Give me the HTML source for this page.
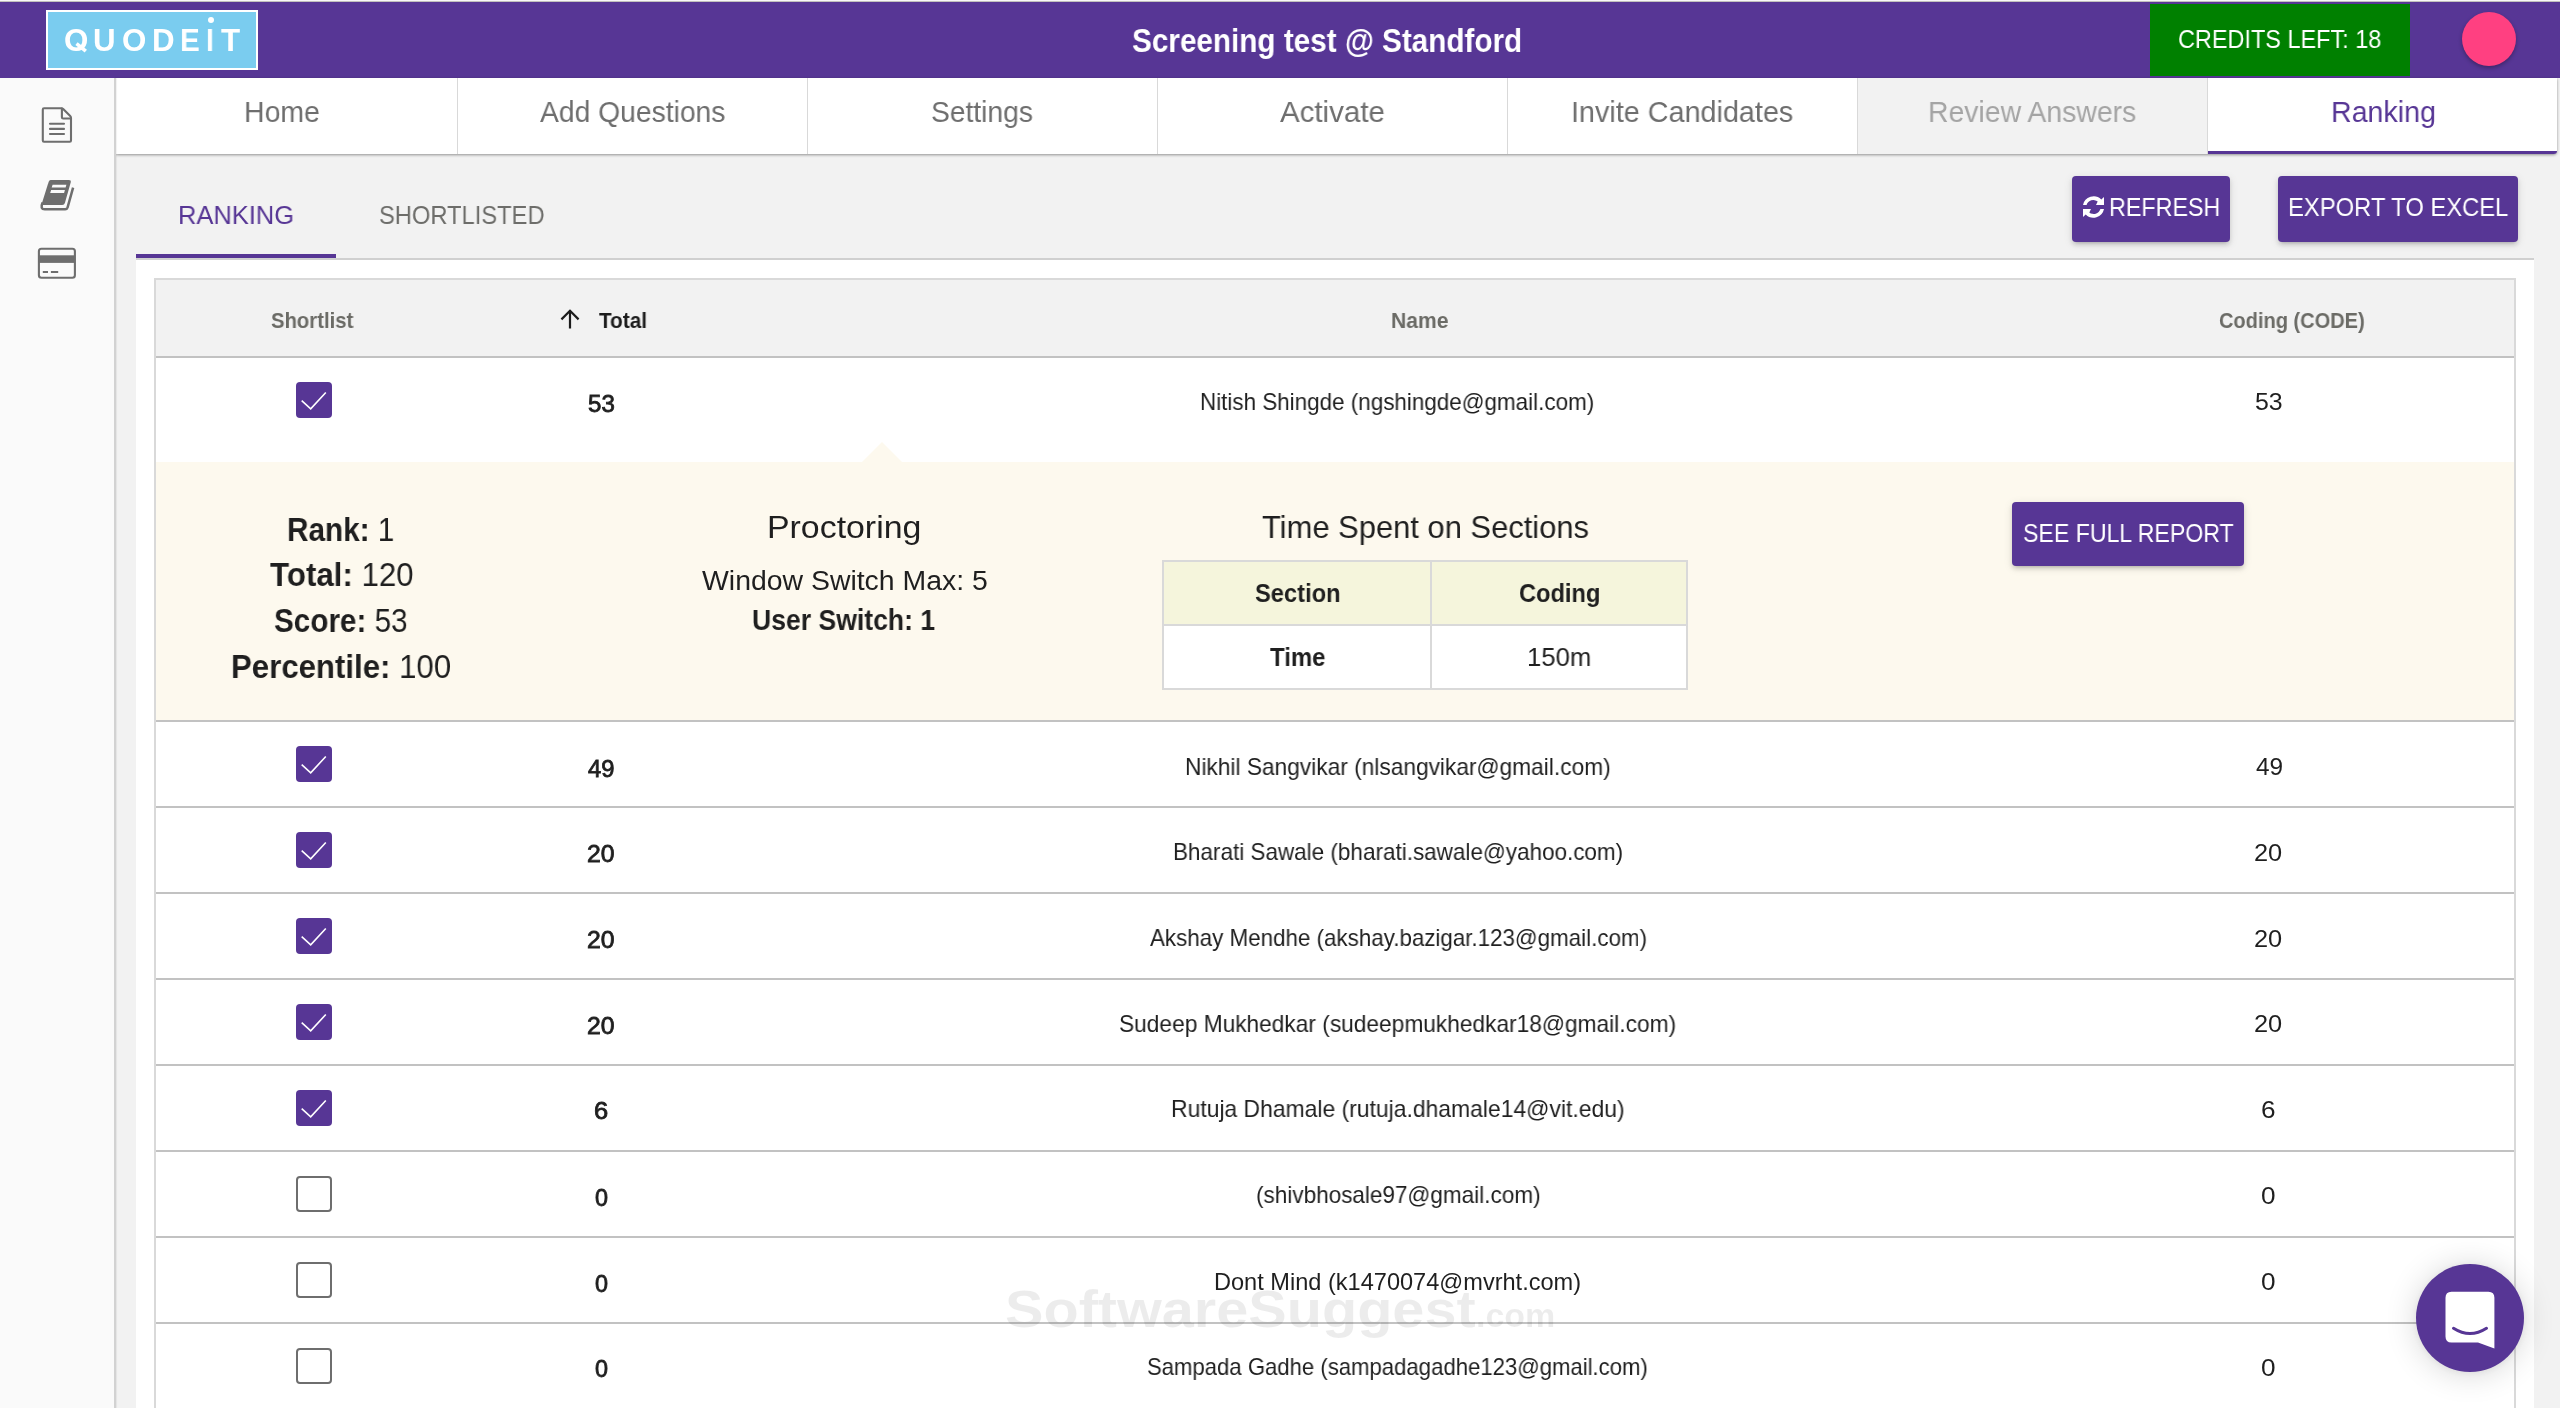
<!DOCTYPE html>
<html><head><meta charset="utf-8">
<style>
*{box-sizing:border-box;margin:0;padding:0}
html,body{width:2560px;height:1408px;overflow:hidden;background:#f2f2f2;font-family:"Liberation Sans",sans-serif}
.a{position:absolute}
.t{position:absolute;white-space:nowrap;line-height:1;transform-origin:0 0;will-change:transform}
.cb{position:absolute;left:296px;width:36px;height:36px;border-radius:4px;background:#573695}
.ub{position:absolute;left:296px;width:36px;height:36px;border-radius:4px;border:2px solid #6e6e6e;background:#fff}
.rl{position:absolute;left:156px;width:2358px;height:2px;background:#c2c2c2}
.btn{position:absolute;border-radius:4px;background:#573695;box-shadow:0 5px 2px -4px rgba(0,0,0,.1),0 3px 4px 0 rgba(0,0,0,.12),0 2px 10px 0 rgba(0,0,0,.1)}
.dv{position:absolute;top:78px;width:1px;height:76px;background:#d9d9d9}
</style></head><body>
<!-- top strip -->
<div class="a" style="left:0;top:0;width:2560px;height:1px;background:#f8f8f8"></div>
<div class="a" style="left:0;top:1px;width:2560px;height:1px;background:#c2c1bd"></div>
<!-- header -->
<div class="a" style="left:0;top:2px;width:2560px;height:76px;background:#573695"></div>
<div class="a" style="left:46px;top:10px;width:212px;height:60px;border:2px solid #fff;background:#7accef"></div>
<div class="a" style="left:207.5px;top:17px;width:6px;height:6px;border-radius:3px;background:#fff"></div>
<div class="a" style="left:2150px;top:4px;width:260px;height:72px;background:#008000"></div>
<div class="a" style="left:2462px;top:12px;width:54px;height:54px;border-radius:50%;background:#ff4081;box-shadow:0 2px 4px rgba(0,0,0,.3)"></div>


<!-- nav bar -->
<div class="a" style="left:116px;top:78px;width:2441px;height:76px;background:#fff;box-shadow:0 1px 3px rgba(0,0,0,.4);border-bottom-right-radius:4px"></div>
<div class="a" style="left:1857px;top:78px;width:350px;height:76px;background:#f2f2f2"></div>
<div class="a" style="left:2207px;top:151px;width:350px;height:3px;background:#573695;border-bottom-right-radius:4px"></div>
<div class="dv" style="left:457px"></div>
<div class="dv" style="left:807px"></div>
<div class="dv" style="left:1157px"></div>
<div class="dv" style="left:1507px"></div>
<div class="dv" style="left:1857px"></div>
<div class="dv" style="left:2207px"></div>

<!-- sidebar -->
<div class="a" style="left:0;top:78px;width:114px;height:1330px;background:#fafafa"></div>
<div class="a" style="left:114px;top:78px;width:2px;height:1330px;background:#d2d2d2;box-shadow:1px 0 1px rgba(0,0,0,.06)"></div>

<!-- sub tabs -->
<div class="a" style="left:136px;top:258px;width:2398px;height:2px;background:#d0d0d0"></div>
<div class="a" style="left:136px;top:254px;width:200px;height:4px;background:#573695"></div>
<div class="btn" style="left:2072px;top:176px;width:158px;height:66px"></div>
<div class="btn" style="left:2278px;top:176px;width:240px;height:66px"></div>

<!-- white panel -->
<div class="a" style="left:136px;top:260px;width:2398px;height:1148px;background:#fff"></div>
<!-- table -->
<div class="a" style="left:154px;top:278px;width:2362px;height:1130px;border:2px solid #d9d9d9;border-bottom:none"></div>
<div class="a" style="left:156px;top:280px;width:2358px;height:76px;background:#f2f2f2"></div>
<div class="rl" style="top:356px"></div>

<!-- cream panel -->
<div class="a" style="left:156px;top:462px;width:2358px;height:258px;background:#fdf9ee"></div>
<div class="a" style="left:862px;top:442px;width:0;height:0;border-left:20px solid transparent;border-right:20px solid transparent;border-bottom:20px solid #fdf9ee"></div>
<div class="rl" style="top:720px"></div>
<div class="rl" style="top:806px"></div>
<div class="rl" style="top:892px"></div>
<div class="rl" style="top:978px"></div>
<div class="rl" style="top:1064px"></div>
<div class="rl" style="top:1150px"></div>
<div class="rl" style="top:1236px"></div>
<div class="rl" style="top:1322px"></div>

<!-- inner table -->
<div class="a" style="left:1162px;top:560px;width:526px;height:130px;border:2px solid #d9d9d9;background:#fff"></div>
<div class="a" style="left:1164px;top:562px;width:522px;height:62px;background:#f5f5dc"></div>
<div class="a" style="left:1164px;top:624px;width:522px;height:2px;background:#d9d9d9"></div>
<div class="a" style="left:1430px;top:562px;width:2px;height:126px;background:#d9d9d9"></div>
<div class="btn" style="left:2012px;top:502px;width:232px;height:64px"></div>

<!-- checkboxes -->
<div class="cb" style="top:382px"></div>
<div class="cb" style="top:746px"></div>
<div class="cb" style="top:832px"></div>
<div class="cb" style="top:918px"></div>
<div class="cb" style="top:1004px"></div>
<div class="cb" style="top:1090px"></div>
<div class="ub" style="top:1176px"></div>
<div class="ub" style="top:1262px"></div>
<div class="ub" style="top:1348px"></div>

<svg class="a" style="left:0;top:0" width="2560" height="1408" viewBox="0 0 2560 1408">
 <path d="M76.5,43.6 L85.8,51.2" stroke="#fff" stroke-width="3.6"/>
 <!-- doc icon -->
 <g fill="none" stroke="#6e6e6e" stroke-width="2.1" stroke-linejoin="round" stroke-linecap="round">
  <path d="M44,108.2 H61.2 Q62.4,108.2 63.2,109 L70.2,116 Q71,116.8 71,118 V140.5 Q71,141.7 69.8,141.7 H44 Q42.8,141.7 42.8,140.5 V109.4 Q42.8,108.2 44,108.2 Z"/>
  <path d="M61.9,108.6 V117.3 Q61.9,118.5 63.1,118.5 H70.6"/>
  <path d="M50,123.8 H64 M50,128.9 H64 M50,134 H64"/>
 </g>
 <!-- book icon -->
 <path fill="#6e6e6e" d="M50.6,180.1 H68.9 Q71.3,180.1 70.7,182.5 L64.9,203 Q64.3,205.1 62.2,205.1 H43.6 Q41.4,205.1 42,203 L48.6,182.1 Q49.3,180.1 50.6,180.1 Z"/>
 <path fill="none" stroke="#6e6e6e" stroke-width="2.5" d="M42.6,202.6 Q39.6,209.3 45,209.3 H65.2 Q67,209.3 67.6,207.4 L73.1,187.6"/>
 <path fill="#fafafa" d="M52.6,184.8 H66.4 L65.6,187.6 H51.7 Z M51.1,189.9 H64.9 L64.1,192.9 H50.2 Z"/>
 <!-- card icon -->
 <g fill="none" stroke="#6e6e6e" stroke-width="2.1">
  <rect x="38.9" y="248.7" width="36" height="29" rx="2.5"/>
 </g>
 <rect x="38.9" y="255.3" width="36" height="7.6" fill="#6e6e6e"/>
 <path d="M42.8,272 H48 M50.9,272 H58.2" stroke="#6e6e6e" stroke-width="2"/>
 <!-- refresh icon -->
 <g fill="#fff">
  <path d="M2083,205 A10.8,10.8 0 0 1 2101.3,199.6 L2104,197 L2104,205 L2096,205 L2097.7,201.6 A7 7 0 0 0 2086.6,205 Z"/>
  <path d="M2104,209 A10.8,10.8 0 0 1 2085.7,214.4 L2083,217 L2083,209 L2091,209 L2089.3,212.4 A7 7 0 0 0 2100.4,209 Z"/>
 </g>
 <!-- sort arrow -->
 <g fill="none" stroke="#1c1c1c" stroke-width="2.2" stroke-linecap="square">
  <path d="M570,311 V327.4 M562.2,318.6 L570,310.8 L577.8,318.6"/>
 </g>
 <!-- check marks -->
 <g fill="none" stroke="#fff" stroke-width="1.6">
  <path d="M301.7,400.7 L310.7,408.8 L325.8,392.5"/>
  <path transform="translate(0,364)" d="M301.7,400.7 L310.7,408.8 L325.8,392.5"/>
  <path transform="translate(0,450)" d="M301.7,400.7 L310.7,408.8 L325.8,392.5"/>
  <path transform="translate(0,536)" d="M301.7,400.7 L310.7,408.8 L325.8,392.5"/>
  <path transform="translate(0,622)" d="M301.7,400.7 L310.7,408.8 L325.8,392.5"/>
  <path transform="translate(0,708)" d="M301.7,400.7 L310.7,408.8 L325.8,392.5"/>
 </g>
</svg>

<div class="t" style="left:1132.12px;top:24.20px;font-size:33.6px;font-weight:700;color:#fff;transform:scaleX(0.8842);">Screening test @ Standford</div>
<div class="t" style="left:2178.48px;top:26.90px;font-size:25.6px;font-weight:400;color:#fff;transform:scaleX(0.9159);">CREDITS LEFT: 18</div>
<div class="t" style="left:64.01px;top:24.60px;font-size:31.3px;font-weight:700;color:#fff;transform:scaleX(0.9864);">O</div>
<div class="t" style="left:93.00px;top:24.60px;font-size:31.3px;font-weight:700;color:#fff;transform:scaleX(1.0000);">U</div>
<div class="t" style="left:122.00px;top:24.60px;font-size:31.3px;font-weight:700;color:#fff;transform:scaleX(1.0000);">O</div>
<div class="t" style="left:152.00px;top:24.60px;font-size:31.3px;font-weight:700;color:#fff;transform:scaleX(1.0000);">D</div>
<div class="t" style="left:180.11px;top:24.60px;font-size:31.3px;font-weight:700;color:#fff;transform:scaleX(0.9444);">E</div>
<div class="t" style="left:206.20px;top:24.60px;font-size:31.3px;font-weight:700;color:#fff;transform:scaleX(0.9000);">I</div>
<div class="t" style="left:221.00px;top:24.60px;font-size:31.3px;font-weight:700;color:#fff;transform:scaleX(1.0000);">T</div>
<div class="t" style="left:244.20px;top:97.00px;font-size:30px;font-weight:400;color:#6e6e6e;transform:scaleX(0.9494);">Home</div>
<div class="t" style="left:539.70px;top:97.00px;font-size:30px;font-weight:400;color:#6e6e6e;transform:scaleX(0.9423);">Add Questions</div>
<div class="t" style="left:931.06px;top:97.00px;font-size:30px;font-weight:400;color:#6e6e6e;transform:scaleX(0.9402);">Settings</div>
<div class="t" style="left:1280.30px;top:97.00px;font-size:30px;font-weight:400;color:#6e6e6e;transform:scaleX(0.9830);">Activate</div>
<div class="t" style="left:1570.52px;top:97.00px;font-size:30px;font-weight:400;color:#6e6e6e;transform:scaleX(0.9588);">Invite Candidates</div>
<div class="t" style="left:1928.31px;top:97.00px;font-size:30px;font-weight:400;color:#a4a4a4;transform:scaleX(0.9465);">Review Answers</div>
<div class="t" style="left:2330.89px;top:97.00px;font-size:30px;font-weight:400;color:#573695;transform:scaleX(0.9528);">Ranking</div>
<div class="t" style="left:177.76px;top:202.00px;font-size:26.3px;font-weight:400;color:#573695;transform:scaleX(0.9698);">RANKING</div>
<div class="t" style="left:379.40px;top:202.00px;font-size:26.3px;font-weight:400;color:#6d6d6a;transform:scaleX(0.9016);">SHORTLISTED</div>
<div class="t" style="left:2109.18px;top:194.90px;font-size:25.6px;font-weight:400;color:#fff;transform:scaleX(0.9102);">REFRESH</div>
<div class="t" style="left:2287.84px;top:194.90px;font-size:25.6px;font-weight:400;color:#fff;transform:scaleX(0.9295);">EXPORT TO EXCEL</div>
<div class="t" style="left:2022.71px;top:520.00px;font-size:26px;font-weight:400;color:#fff;transform:scaleX(0.8890);">SEE FULL REPORT</div>
<div class="t" style="left:271.16px;top:309.70px;font-size:21.6px;font-weight:700;color:#6b6b66;transform:scaleX(0.9379);">Shortlist</div>
<div class="t" style="left:598.60px;top:309.70px;font-size:21.6px;font-weight:700;color:#1c1c1c;transform:scaleX(0.9612);">Total</div>
<div class="t" style="left:1390.82px;top:309.80px;font-size:21.6px;font-weight:700;color:#6b6b66;transform:scaleX(0.9789);">Name</div>
<div class="t" style="left:2218.67px;top:309.70px;font-size:21.6px;font-weight:700;color:#6b6b66;transform:scaleX(0.9271);">Coding (CODE)</div>
<div class="t" style="left:587.75px;top:393.20px;font-size:23px;font-weight:400;color:#1f1f1f;transform:scaleX(1.0458);-webkit-text-stroke:0.8px #1f1f1f">53</div>
<div class="t" style="left:1200.38px;top:390.50px;font-size:23.4px;font-weight:400;color:#1f1f1f;transform:scaleX(0.9586);">Nitish Shingde (ngshingde@gmail.com)</div>
<div class="t" style="left:2254.65px;top:391.20px;font-size:23.6px;font-weight:400;color:#1f1f1f;transform:scaleX(1.0542);">53</div>
<div class="t" style="left:287.15px;top:512.50px;font-size:33.9px;font-weight:400;color:#1f1f1f;transform:scaleX(0.8773);"><b>Rank:</b> 1</div>
<div class="t" style="left:269.70px;top:557.90px;font-size:33.9px;font-weight:400;color:#1f1f1f;transform:scaleX(0.9227);"><b>Total:</b> 120</div>
<div class="t" style="left:274.22px;top:603.80px;font-size:33.9px;font-weight:400;color:#1f1f1f;transform:scaleX(0.8753);"><b>Score:</b> 53</div>
<div class="t" style="left:231.16px;top:649.80px;font-size:33.9px;font-weight:400;color:#1f1f1f;transform:scaleX(0.9199);"><b>Percentile:</b> 100</div>
<div class="t" style="left:767.33px;top:510.80px;font-size:32px;font-weight:400;color:#1f1f1f;transform:scaleX(1.0582);">Proctoring</div>
<div class="t" style="left:701.70px;top:565.70px;font-size:28.4px;font-weight:400;color:#1f1f1f;transform:scaleX(1.0007);">Window Switch Max: 5</div>
<div class="t" style="left:752.17px;top:605.70px;font-size:29px;font-weight:700;color:#1f1f1f;transform:scaleX(0.9162);">User Switch: 1</div>
<div class="t" style="left:1261.83px;top:510.70px;font-size:32px;font-weight:400;color:#1f1f1f;transform:scaleX(0.9659);">Time Spent on Sections</div>
<div class="t" style="left:1254.79px;top:580.10px;font-size:26px;font-weight:700;color:#1f1f1f;transform:scaleX(0.9110);">Section</div>
<div class="t" style="left:1519.09px;top:580.10px;font-size:26px;font-weight:700;color:#1f1f1f;transform:scaleX(0.9080);">Coding</div>
<div class="t" style="left:1269.90px;top:643.70px;font-size:26px;font-weight:700;color:#1f1f1f;transform:scaleX(0.9200);">Time</div>
<div class="t" style="left:1527.23px;top:643.70px;font-size:26px;font-weight:400;color:#1f1f1f;transform:scaleX(0.9871);">150m</div>
<div class="t" style="left:1184.76px;top:755.50px;font-size:23.4px;font-weight:400;color:#1f1f1f;transform:scaleX(0.9708);">Nikhil Sangvikar (nlsangvikar@gmail.com)</div>
<div class="t" style="left:588.30px;top:757.70px;font-size:23px;font-weight:400;color:#1f1f1f;transform:scaleX(1.0320);-webkit-text-stroke:0.8px #1f1f1f">49</div>
<div class="t" style="left:2255.50px;top:756.30px;font-size:23.6px;font-weight:400;color:#1f1f1f;transform:scaleX(1.0320);">49</div>
<div class="t" style="left:1172.58px;top:841.20px;font-size:23.4px;font-weight:400;color:#1f1f1f;transform:scaleX(0.9611);">Bharati Sawale (bharati.sawale@yahoo.com)</div>
<div class="t" style="left:587.23px;top:843.40px;font-size:23px;font-weight:400;color:#1f1f1f;transform:scaleX(1.0750);-webkit-text-stroke:0.8px #1f1f1f">20</div>
<div class="t" style="left:2254.43px;top:842.00px;font-size:23.6px;font-weight:400;color:#1f1f1f;transform:scaleX(1.0750);">20</div>
<div class="t" style="left:1149.90px;top:927.20px;font-size:23.4px;font-weight:400;color:#1f1f1f;transform:scaleX(0.9559);">Akshay Mendhe (akshay.bazigar.123@gmail.com)</div>
<div class="t" style="left:587.23px;top:929.40px;font-size:23px;font-weight:400;color:#1f1f1f;transform:scaleX(1.0750);-webkit-text-stroke:0.8px #1f1f1f">20</div>
<div class="t" style="left:2254.43px;top:928.00px;font-size:23.6px;font-weight:400;color:#1f1f1f;transform:scaleX(1.0750);">20</div>
<div class="t" style="left:1118.93px;top:1012.60px;font-size:23.4px;font-weight:400;color:#1f1f1f;transform:scaleX(0.9710);">Sudeep Mukhedkar (sudeepmukhedkar18@gmail.com)</div>
<div class="t" style="left:587.23px;top:1014.80px;font-size:23px;font-weight:400;color:#1f1f1f;transform:scaleX(1.0750);-webkit-text-stroke:0.8px #1f1f1f">20</div>
<div class="t" style="left:2254.43px;top:1013.40px;font-size:23.6px;font-weight:400;color:#1f1f1f;transform:scaleX(1.0750);">20</div>
<div class="t" style="left:1170.74px;top:1098.20px;font-size:23.4px;font-weight:400;color:#1f1f1f;transform:scaleX(0.9791);">Rutuja Dhamale (rutuja.dhamale14@vit.edu)</div>
<div class="t" style="left:593.99px;top:1100.40px;font-size:23px;font-weight:400;color:#1f1f1f;transform:scaleX(1.1091);-webkit-text-stroke:0.8px #1f1f1f">6</div>
<div class="t" style="left:2261.19px;top:1099.00px;font-size:23.6px;font-weight:400;color:#1f1f1f;transform:scaleX(1.1091);">6</div>
<div class="t" style="left:1255.54px;top:1184.40px;font-size:23.4px;font-weight:400;color:#1f1f1f;transform:scaleX(0.9631);">(shivbhosale97@gmail.com)</div>
<div class="t" style="left:595.10px;top:1186.60px;font-size:23px;font-weight:400;color:#1f1f1f;transform:scaleX(1.0167);-webkit-text-stroke:0.8px #1f1f1f">0</div>
<div class="t" style="left:2261.19px;top:1185.20px;font-size:23.6px;font-weight:400;color:#1f1f1f;transform:scaleX(1.1091);">0</div>
<div class="t" style="left:1213.79px;top:1270.60px;font-size:23.4px;font-weight:400;color:#1f1f1f;transform:scaleX(1.0075);">Dont Mind (k1470074@mvrht.com)</div>
<div class="t" style="left:595.10px;top:1272.80px;font-size:23px;font-weight:400;color:#1f1f1f;transform:scaleX(1.0167);-webkit-text-stroke:0.8px #1f1f1f">0</div>
<div class="t" style="left:2261.19px;top:1271.40px;font-size:23.6px;font-weight:400;color:#1f1f1f;transform:scaleX(1.1091);">0</div>
<div class="t" style="left:1147.35px;top:1355.90px;font-size:23.4px;font-weight:400;color:#1f1f1f;transform:scaleX(0.9457);">Sampada Gadhe (sampadagadhe123@gmail.com)</div>
<div class="t" style="left:595.10px;top:1358.10px;font-size:23px;font-weight:400;color:#1f1f1f;transform:scaleX(1.0167);-webkit-text-stroke:0.8px #1f1f1f">0</div>
<div class="t" style="left:2261.19px;top:1356.70px;font-size:23.6px;font-weight:400;color:#1f1f1f;transform:scaleX(1.1091);">0</div>
<div class="t" style="left:1005.18px;top:1283.00px;font-size:52px;font-weight:700;color:rgba(0,0,0,0.075);transform:scaleX(1.1081);">SoftwareSuggest</div>
<div class="t" style="left:1476.00px;top:1298.00px;font-size:34px;font-weight:700;color:rgba(0,0,0,0.075);transform:scaleX(1.0000);">.com</div>

<!-- chat bubble -->
<div class="a" style="left:2416px;top:1264px;width:108px;height:108px;border-radius:50%;background:#573695;box-shadow:0 1px 6px rgba(0,0,0,.06),0 2px 32px rgba(0,0,0,.16)"></div>
<svg class="a" style="left:0;top:0" width="2560" height="1408" viewBox="0 0 2560 1408">
 <path d="M2451.5,1291.7 H2488.4 Q2494.4,1291.7 2494.4,1297.7 V1348.6 L2478,1342.4 H2451.5 Q2445.5,1342.4 2445.5,1336.4 V1297.7 Q2445.5,1291.7 2451.5,1291.7 Z" fill="#fff"/>
 <path d="M2453.5,1328.3 Q2470,1338.8 2486.5,1328.3" fill="none" stroke="#573695" stroke-width="3" stroke-linecap="round"/>
</svg>
</body></html>
